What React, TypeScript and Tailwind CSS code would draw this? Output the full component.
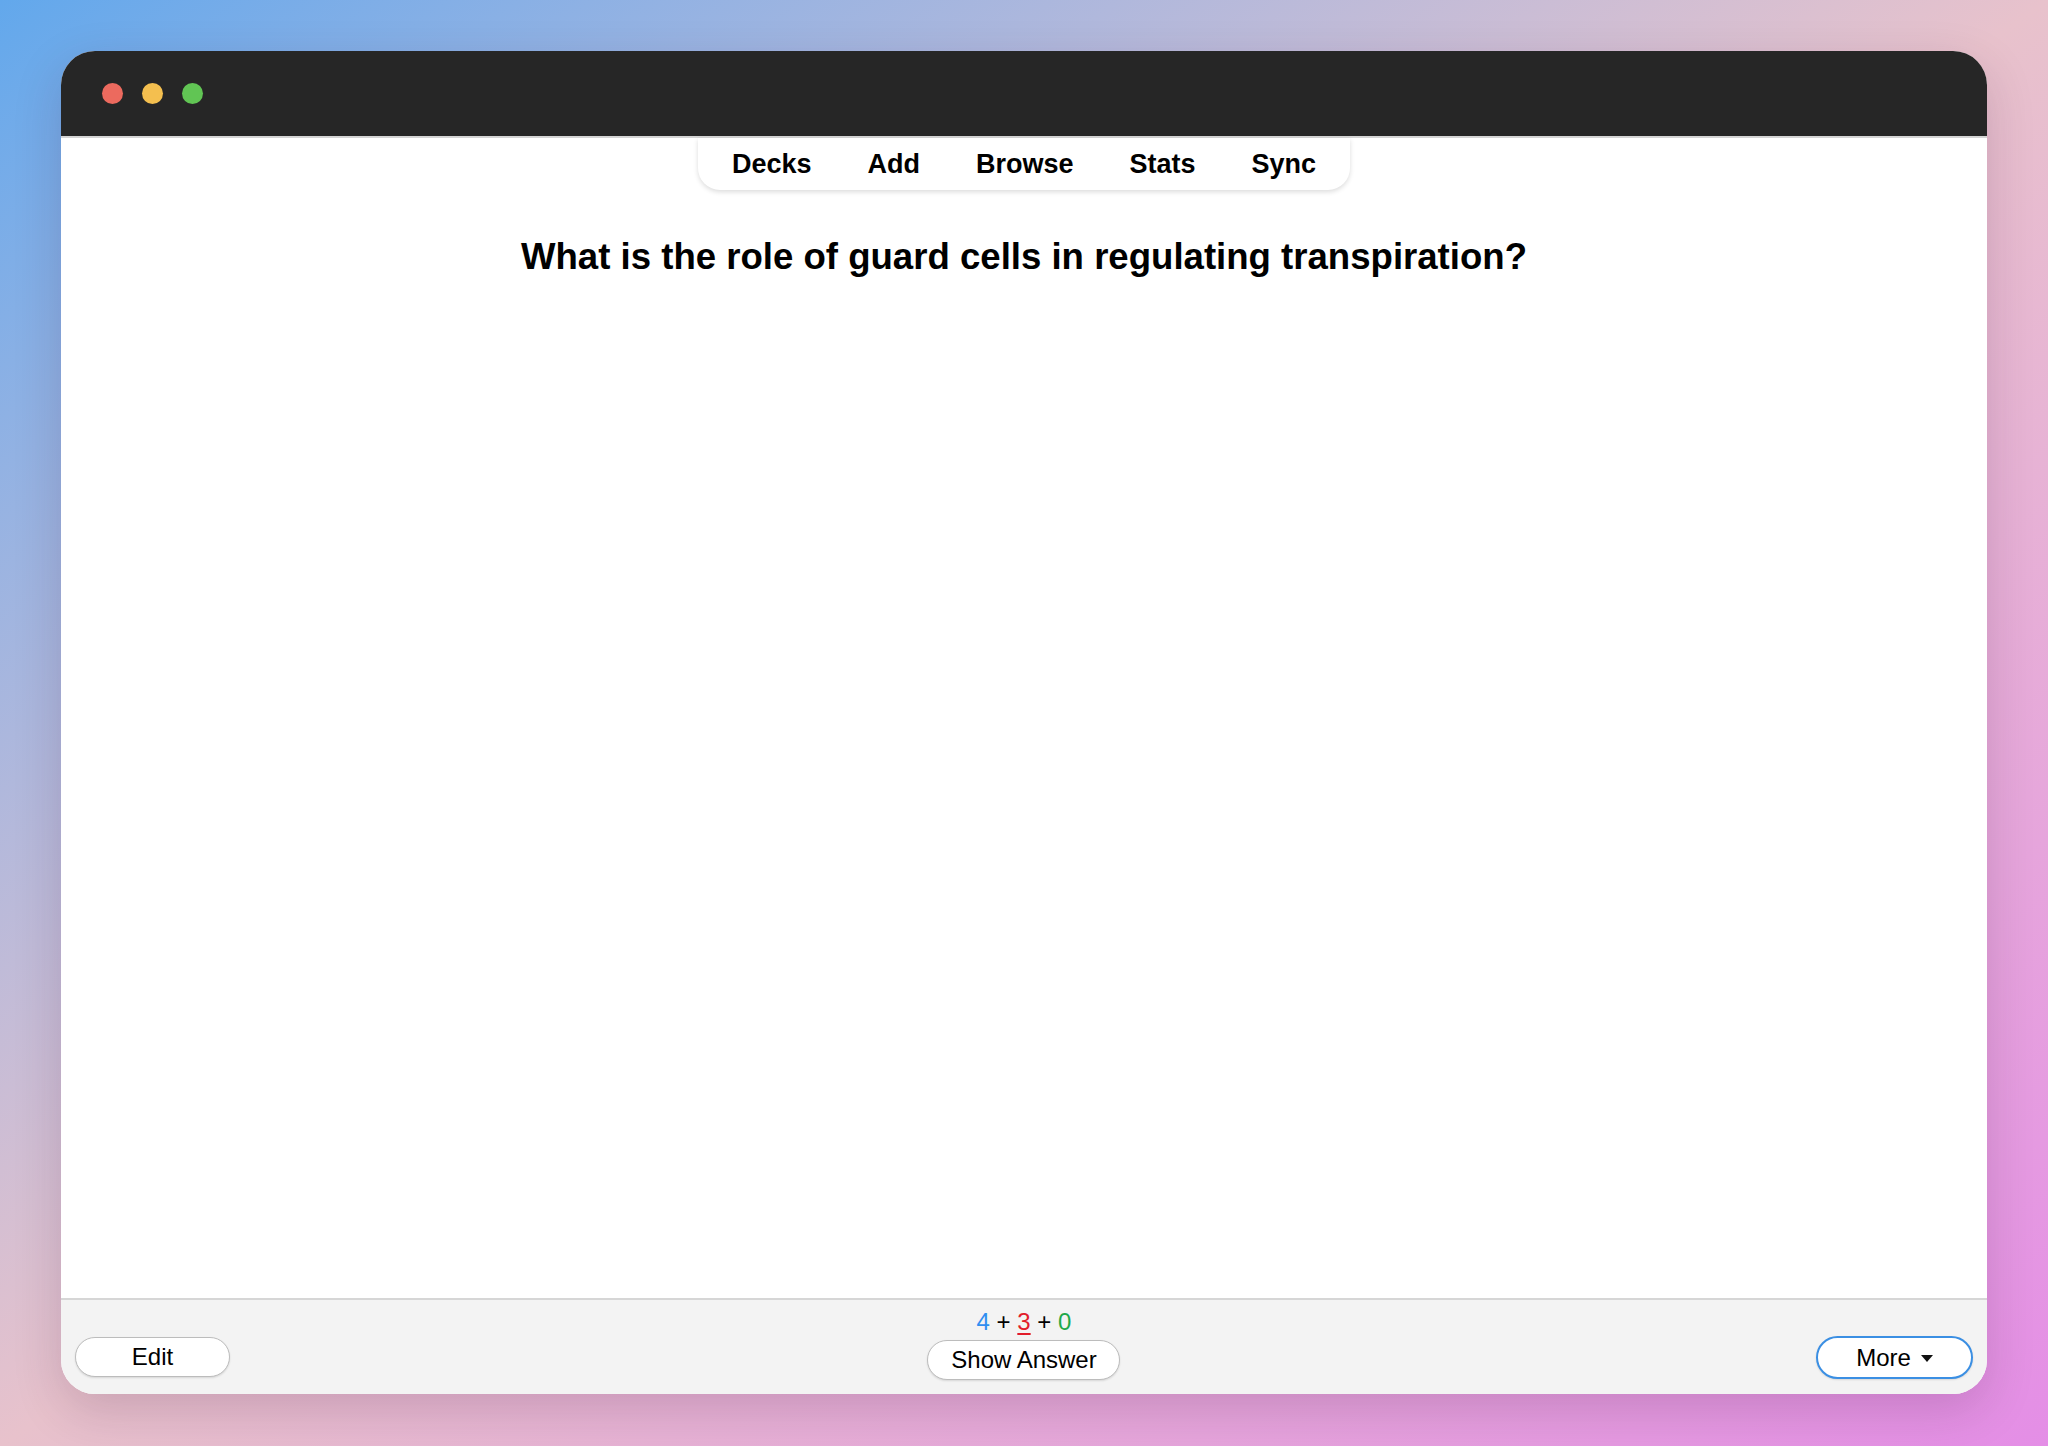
const navItems = ["Decks", "Add", "Browse", "Stats", "Sync"];

function TrafficLights() {
  return (
    <div className="flex items-center gap-[19px] pl-[41px]">
      <span className="block h-[21px] w-[21px] rounded-full bg-[#ec6a5e]" />
      <span className="block h-[21px] w-[21px] rounded-full bg-[#f4bf4f]" />
      <span className="block h-[21px] w-[21px] rounded-full bg-[#61c554]" />
    </div>
  );
}

export default function App() {
  return (
    <main className="flex h-[1446px] w-full bg-linear-to-br from-[#62a8ec] via-[#e8c2cc] to-[#e48ee6] pt-[51px] pr-[61px] pb-[52px] pl-[61px] font-['Liberation_Sans',Arial,sans-serif]">
      <div className="flex flex-1 flex-col overflow-hidden rounded-[34px] bg-white shadow-[0_16px_48px_rgba(60,20,60,0.18)]">
        {/* title bar */}
        <div className="flex h-[87px] shrink-0 items-center border-b-2 border-[#d4d4d4] bg-[#262626]">
          <TrafficLights />
        </div>

        {/* reviewer */}
        <div className="flex flex-1 flex-col items-center">
          <nav className="flex gap-[56px] rounded-b-[22px] bg-white px-[34px] pt-[13px] pb-[12px] shadow-[0_2px_5px_rgba(0,0,0,0.14)]">
            {navItems.map(item => (
              <span key={item} className="text-[27px] leading-none font-bold text-black">{item}</span>
            ))}
          </nav>
          <h1 className="mt-[49px] text-[36.6px] leading-none font-bold text-black">
            What is the role of guard cells in regulating transpiration?
          </h1>
        </div>

        {/* bottom bar */}
        <div className="grid h-[96px] shrink-0 grid-cols-3 border-t-2 border-[#d6d6d6] bg-[#f3f3f3] px-[14px]">
          <div className="flex items-end justify-start pb-[17px]">
            <button className="h-[40px] w-[155px] rounded-full border border-[#bcbcbc] bg-white text-[24px] text-black shadow-[0_1px_2px_rgba(0,0,0,0.12)]">
              Edit
            </button>
          </div>
          <div className="flex flex-col items-center pt-[10px]">
            <div className="text-[24px] leading-none text-black">
              <span className="text-[#2f8ef0]">4</span> + <span className="text-[#e21d2a] underline underline-offset-[3px]">3</span> + <span className="text-[#1fa84a]">0</span>
            </div>
            <button className="mt-[6px] h-[40px] w-[193px] rounded-full border border-[#bcbcbc] bg-white text-[24px] text-black shadow-[0_1px_2px_rgba(0,0,0,0.12)]">
              Show Answer
            </button>
          </div>
          <div className="flex items-end justify-end pb-[15px]">
            <button className="flex h-[43px] w-[157px] items-center justify-center gap-[10px] rounded-full border-2 border-[#3b8fe3] bg-white text-[24px] text-black shadow-[0_1px_2px_rgba(0,0,0,0.12)]">
              <span>More</span>
              <svg width="12" height="7" viewBox="0 0 12 7" className="mt-[2px]">
                <path d="M0 0 H12 L6 7 Z" fill="#111" />
              </svg>
            </button>
          </div>
        </div>
      </div>
    </main>
  );
}
